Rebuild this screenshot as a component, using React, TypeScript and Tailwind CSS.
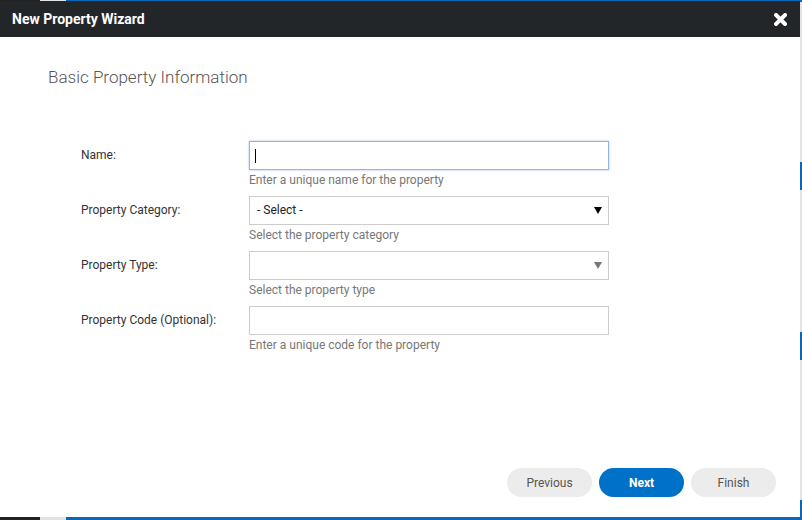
import { useState } from 'react'

const fields = [
  { label: 'Name:', help: 'Enter a unique name for the property', kind: 'input', focus: true },
  { label: 'Property Category:', help: 'Select the property category', kind: 'select', value: '- Select -' },
  { label: 'Property Type:', help: 'Select the property type', kind: 'select', disabled: true },
  { label: 'Property Code (Optional):', help: 'Enter a unique code for the property', kind: 'input' },
]

function Caret({ muted }: { muted?: boolean }) {
  return (
    <svg width="8" height="7" viewBox="0 0 8 7" className={muted ? 'text-[#777]' : 'text-black'}>
      <path d="M0 0h8L4 7z" fill="currentColor" />
    </svg>
  )
}

export default function App() {
  const [name, setName] = useState('')

  return (
    <div
      className="relative h-[520px] w-[802px] overflow-hidden bg-[#e3e3e3]"
      style={{ fontFamily: 'Roboto, "Liberation Sans", sans-serif' }}
    >
      {/* page behind the modal */}
      <div className="absolute left-0 top-0 flex h-[2px] w-full">
        <div className="w-[40px] bg-[#222]" />
        <div className="w-[26px] bg-[#e3e3e3]" />
        <div className="flex-1 bg-[#0a66b7]" />
      </div>
      <div className="absolute bottom-0 left-0 flex h-[4px] w-full">
        <div className="w-[40px] bg-[#222]" />
        <div className="w-[26px] bg-[#e3e3e3]" />
        <div className="flex-1 bg-[#0a66b7]" />
      </div>
      <div className="absolute right-0 top-[162px] h-[28px] w-[2px] bg-[#0a66b7]" />
      <div className="absolute right-0 top-[332px] h-[28px] w-[2px] bg-[#0a66b7]" />
      <div className="absolute right-0 top-[500px] h-[20px] w-[2px] bg-[#0a66b7]" />

      {/* modal */}
      <div className="absolute left-0 top-[1px] flex h-[516px] w-[800px] flex-col bg-white">
        <div className="flex h-[36px] items-center justify-between bg-[#232629] pl-[12px] pr-[13px]">
          <span className="text-[14px] font-bold text-white">New Property Wizard</span>
          <svg width="13" height="13" viewBox="0 0 13 13">
            <path d="M2 2l9 9M11 2L2 11" stroke="white" strokeWidth="4" strokeLinecap="square" />
          </svg>
        </div>

        <div className="flex flex-1 flex-col">
          <h2 className="ml-[48px] mt-[28px] text-[17px] font-light text-[#555]">Basic Property Information</h2>

          <div className="ml-[81px] mt-[50px] flex flex-col gap-[8px]">
            {fields.map((f) => (
              <div key={f.label} className="flex">
                <label className="flex h-[29px] w-[168px] items-center text-[12px] text-[#333]">{f.label}</label>
                <div className="flex w-[360px] flex-col">
                  {f.kind === 'input' ? (
                    <div className="relative">
                      <input
                        value={f.focus ? name : ''}
                        onChange={(e) => setName(e.target.value)}
                        className={`h-[29px] w-full border px-[6px] text-[12px] outline-none ${
                          f.focus ? 'border-[#8fb4ee] shadow-[0_0_2px_#9bbcf0]' : 'border-[#ccc]'
                        }`}
                      />
                      {f.focus && !name && (
                        <div className="absolute left-[6px] top-[8px] h-[14px] w-[1px] bg-black" />
                      )}
                    </div>
                  ) : (
                    <div className="flex h-[29px] w-full items-center justify-between border border-[#ccc] pl-[7px] pr-[6px] text-[12px] text-[#222]">
                      <span>{f.value ?? ''}</span>
                      <Caret muted={f.disabled} />
                    </div>
                  )}
                  <span className="mt-[3px] text-[12px] leading-[15px] text-[#777]">{f.help}</span>
                </div>
              </div>
            ))}
          </div>
        </div>

        <div className="mb-[20px] mr-[24px] flex justify-end gap-[7px]">
          <button className="h-[29px] w-[85px] rounded-full bg-[#ececec] text-[12px] text-[#555]">Previous</button>
          <button className="h-[29px] w-[85px] rounded-full bg-[#0071c9] text-[12px] font-bold text-white">Next</button>
          <button className="h-[29px] w-[85px] rounded-full bg-[#ececec] text-[12px] text-[#555]">Finish</button>
        </div>
      </div>
    </div>
  )
}
